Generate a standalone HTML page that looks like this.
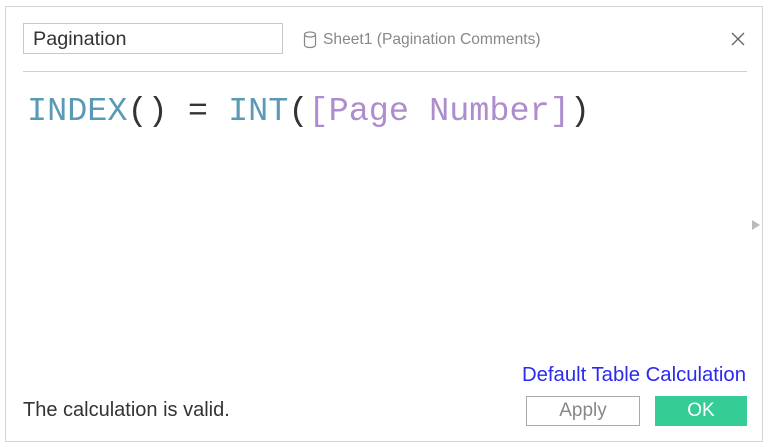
<!DOCTYPE html><html><head><style>
body{margin:0;width:768px;height:447px;background:#fff;position:relative;font-family:"Liberation Sans",sans-serif;overflow:hidden}
.frame{position:absolute;left:5px;top:6px;width:756px;height:434px;border:1px solid #d4d4d4;}
.a{position:absolute}
</style></head><body>
<div class="frame"></div>
<div class="a" style="left:23px;top:23px;width:260px;height:31px;border:1px solid #c8c8c8;box-sizing:border-box;font-size:19.8px;color:#333;line-height:30px;padding-left:9px">Pagination</div>
<svg class="a" style="left:303px;top:31px" width="14" height="18"><ellipse cx="7" cy="3.5" rx="5.5" ry="2.5" fill="none" stroke="#888" stroke-width="1.2"/><path d="M1.5 3.5V14a5.5 2.5 0 0 0 11 0V3.5" fill="none" stroke="#888" stroke-width="1.2"/></svg>
<div class="a" style="left:323px;top:31px;font-size:15.6px;color:#888">Sheet1 (Pagination Comments)</div>
<svg class="a" style="left:731px;top:32px" width="14" height="14"><path d="M1 1L13 13M13 1L1 13" stroke="#666" stroke-width="1.4"/></svg>
<div class="a" style="left:23px;top:71px;width:724px;height:1px;background:#d0d0d0"></div>
<div class="a" style="left:27px;top:93px;font-family:'Liberation Mono',monospace;font-size:33.5px;white-space:pre;color:#333"><span style="color:#5b9ab6">INDEX</span>() = <span style="color:#5b9ab6">INT</span>(<span style="color:#ad8dcb">[Page Number]</span>)</div>
<svg class="a" style="left:751px;top:219px" width="10" height="12"><path d="M1 1L9 6L1 11Z" fill="#bbb"/></svg>
<div class="a" style="left:522px;top:364px;font-size:20.3px;color:#2a2af0">Default Table Calculation</div>
<div class="a" style="left:23px;top:399px;font-size:20px;color:#333">The calculation is valid.</div>
<div class="a" style="left:526px;top:396px;width:114px;height:30px;border:1px solid #aaa;box-sizing:border-box;font-size:19px;color:#888;text-align:center;line-height:28px">Apply</div>
<div class="a" style="left:655px;top:396px;width:92px;height:30px;background:#35cc96;font-size:19px;color:#fff;text-align:center;line-height:30px">OK</div>
</body></html>
